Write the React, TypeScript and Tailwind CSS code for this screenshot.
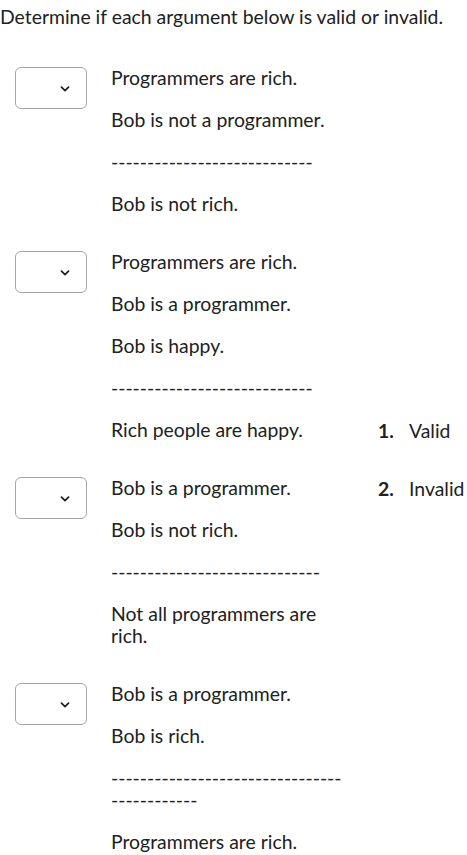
import React from 'react';

const arguments_: string[][] = [
  ['Programmers are rich.', 'Bob is not a programmer.', '-'.repeat(28), 'Bob is not rich.'],
  ['Programmers are rich.', 'Bob is a programmer.', 'Bob is happy.', '-'.repeat(28), 'Rich people are happy.'],
  ['Bob is a programmer.', 'Bob is not rich.', '-'.repeat(29), 'Not all programmers are rich.'],
  ['Bob is a programmer.', 'Bob is rich.', '-'.repeat(44), 'Programmers are rich.'],
];

const Chevron = () => (
  <svg width="10" height="6" viewBox="0 0 10 6" fill="none">
    <path d="M1.5 1.2 L5 4.6 L8.5 1.2" stroke="#202122" strokeWidth="1.8" strokeLinecap="round" strokeLinejoin="round" />
  </svg>
);

const App: React.FC = () => {
  return (
    <div className="bg-white text-[#202122] text-[19.4px] leading-[22px]" style={{ fontFamily: 'Lato, "Open Sans", sans-serif' }}>
      <p className="pt-[6px] mb-[39px]">Determine if each argument below is valid or invalid.</p>

      <div className="flex items-center">
        {/* Arguments with dropdowns */}
        <div className="flex flex-col gap-[36px] pl-[15px]">
          {arguments_.map((lines, i) => (
            <div key={i} className="flex items-start">
              <button className="w-[72px] h-[42px] border border-[#a5a5a5] rounded-[6px] bg-white flex items-center justify-end pr-[16px] pt-[2px]">
                <Chevron />
              </button>
              <div className="ml-[24px] w-[232px] flex flex-col gap-[20px]">
                {lines.map((line, j) => (
                  <p key={j} className={line.startsWith('-') ? 'break-all' : ''}>{line}</p>
                ))}
              </div>
            </div>
          ))}
        </div>

        {/* Answer options */}
        <ol className="ml-[35px] flex flex-col gap-[36px]">
          <li className="flex">
            <span className="w-[31px] font-bold">1.</span>
            <span>Valid</span>
          </li>
          <li className="flex">
            <span className="w-[31px] font-bold">2.</span>
            <span>Invalid</span>
          </li>
        </ol>
      </div>
    </div>
  );
};

export default App;
